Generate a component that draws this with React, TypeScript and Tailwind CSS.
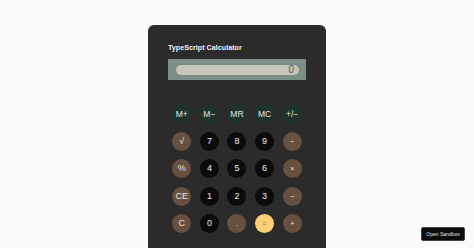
const memoryKeys = ['M+', 'M−', 'MR', 'MC', '+/−']

type Key = { label: string; kind: 'op' | 'num' | 'eq'; small?: boolean }

const keys: Key[] = [
  { label: '√', kind: 'op' },
  { label: '7', kind: 'num' },
  { label: '8', kind: 'num' },
  { label: '9', kind: 'num' },
  { label: '÷', kind: 'op', small: true },
  { label: '%', kind: 'op' },
  { label: '4', kind: 'num' },
  { label: '5', kind: 'num' },
  { label: '6', kind: 'num' },
  { label: '×', kind: 'op', small: true },
  { label: 'CE', kind: 'op' },
  { label: '1', kind: 'num' },
  { label: '2', kind: 'num' },
  { label: '3', kind: 'num' },
  { label: '−', kind: 'op', small: true },
  { label: 'C', kind: 'op' },
  { label: '0', kind: 'num' },
  { label: '.', kind: 'op', small: true },
  { label: '=', kind: 'eq', small: true },
  { label: '+', kind: 'op', small: true },
]

const keyColors = {
  op: 'bg-[#67503f] text-[#ece6df]',
  num: 'bg-[#0b0b0b] text-[#ececec]',
  eq: 'bg-[#fdd078] text-[#8a6a35]',
}

export default function App() {
  return (
    <div className="min-h-screen bg-[#fafafa] pt-[25px] font-['Liberation_Sans',Arial,sans-serif]">
      <div className="mx-auto w-[178px] rounded-[6px] bg-[#2b2b2b] px-5 pt-[18px] pb-5">
        <h1 className="text-[7.2px] leading-[9px] font-bold text-[#f2f2f2]">
          TypeScript Calculator
        </h1>

        <div className="mt-[7px] h-[21px] bg-[#7b8f87] pt-[6px] pr-[7px] pl-[8px]">
          <div className="flex h-[10px] items-center justify-end rounded-full bg-[#c6c5b8] pr-[5px] text-[10px] leading-none text-[#55554e]">
            0
          </div>
        </div>

        <div className="mt-5 grid grid-cols-5">
          {memoryKeys.map((k) => (
            <div key={k} className="flex h-[27.5px] items-center justify-center">
              <button className="flex h-[20px] w-[20px] items-center justify-center rounded-full bg-[#1e3329] text-[8.5px] leading-none text-[#e6e6e6]">
                {k}
              </button>
            </div>
          ))}
          {keys.map((k, i) => (
            <div key={i} className="flex h-[27.5px] items-center justify-center">
              <button
                className={`flex h-[19px] w-[19px] items-center justify-center rounded-full leading-none ${
                  k.small ? 'text-[7px]' : 'text-[9px]'
                } ${keyColors[k.kind]}`}
              >
                {k.label}
              </button>
            </div>
          ))}
        </div>
      </div>

      <button className="fixed right-[9px] bottom-[7px] flex h-[14px] w-[44px] items-center justify-center rounded-[2px] border border-[#444] bg-[#0c0c0c] text-[5px] leading-none text-[#e6e6e6]">
        Open Sandbox
      </button>
    </div>
  )
}
